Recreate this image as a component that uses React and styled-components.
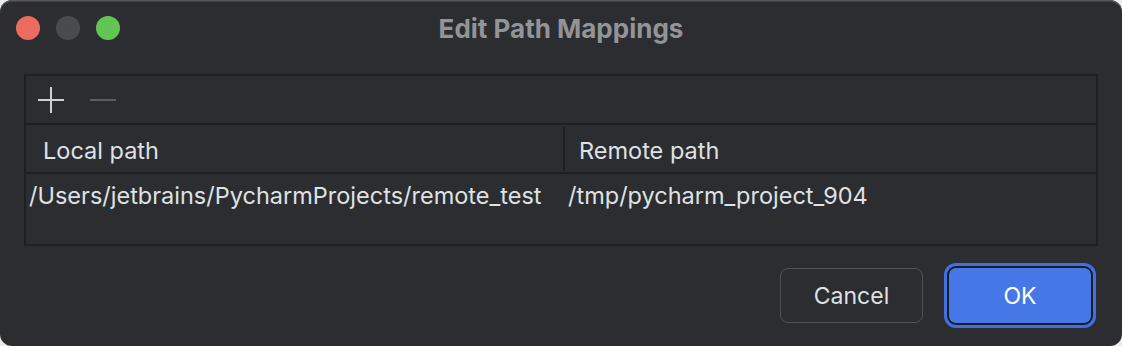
import React from "react";
import styled, { createGlobalStyle } from "styled-components";

const GlobalStyle = createGlobalStyle`
  html, body {
    margin: 0;
    padding: 0;
    background: #ececec;
  }
  body {
    font-family: Inter, "Noto Sans", sans-serif;
    -webkit-font-smoothing: antialiased;
  }
`;

const mappings = [
  { local: "/Users/jetbrains/PycharmProjects/remote_test", remote: "/tmp/pycharm_project_904" },
];

function App() {
  return (
    <>
      <GlobalStyle />
      <Window>
        <TitleBar>
          <Lights>
            <Light color="#ed6a5e" />
            <Light color="#4a4b4f" />
            <Light color="#61c554" />
          </Lights>
          <Title>Edit Path Mappings</Title>
          <span />
        </TitleBar>

        <Content>
          <Table>
            <Toolbar>
              <ToolButton>
                <svg width="26" height="26" viewBox="0 0 26 26">
                  <path d="M13 0v26M0 13h26" stroke="#ced0d6" strokeWidth="2" />
                </svg>
              </ToolButton>
              <ToolButton>
                <svg width="26" height="26" viewBox="0 0 26 26">
                  <path d="M0 13h26" stroke="#5a5d63" strokeWidth="2" />
                </svg>
              </ToolButton>
            </Toolbar>
            <HeaderRow>
              <HeaderCell pad={17} divider>Local path</HeaderCell>
              <HeaderCell pad={14}>Remote path</HeaderCell>
            </HeaderRow>
            <Body>
              {mappings.map((m) => (
                <Row key={m.local}>
                  <Cell>{m.local}</Cell>
                  <Cell>{m.remote}</Cell>
                </Row>
              ))}
            </Body>
          </Table>
        </Content>

        <Footer>
          <CancelButton>Cancel</CancelButton>
          <OkButton>OK</OkButton>
        </Footer>
      </Window>
    </>
  );
}

export default App;

const Window = styled.div`
  width: 1122px;
  height: 346px;
  box-sizing: border-box;
  background: #2b2d30;
  border-radius: 12px;
  box-shadow: inset 0 1.5px 0 #56575b;
  display: flex;
  flex-direction: column;
  overflow: hidden;
`;

const TitleBar = styled.div`
  height: 56px;
  display: grid;
  grid-template-columns: 1fr auto 1fr;
  align-items: center;
  padding: 0 16px;
`;

const Lights = styled.div`
  display: flex;
  gap: 16px;
`;

const Light = styled.span`
  width: 24px;
  height: 24px;
  border-radius: 50%;
  background: ${(p) => p.color};
`;

const Title = styled.div`
  font-size: 26px;
  font-weight: 700;
  color: #939497;
`;

const Content = styled.div`
  padding: 18px 24px 0;
`;

const Table = styled.div`
  height: 172px;
  box-sizing: border-box;
  border: 2px solid #1e1f22;
  display: flex;
  flex-direction: column;
`;

const Toolbar = styled.div`
  height: 49px;
  box-sizing: border-box;
  border-bottom: 2px solid #1e1f22;
  display: flex;
  align-items: center;
  gap: 26px;
  padding-left: 12px;
`;

const ToolButton = styled.span`
  display: flex;
  width: 26px;
  height: 26px;
`;

const HeaderRow = styled.div`
  height: 49px;
  box-sizing: border-box;
  border-bottom: 2px solid #1e1f22;
  display: grid;
  grid-template-columns: 539px 1fr;
  align-items: center;
`;

const HeaderCell = styled.div`
  height: 44px;
  display: flex;
  align-items: center;
  padding: 3px 0 0 ${(p) => p.pad}px;
  box-sizing: border-box;
  border-right: ${(p) => (p.divider ? "2px solid #1e1f22" : "none")};
  font-size: 23.5px;
  color: #dfe1e5;
`;

const Body = styled.div`
  flex: 1;
`;

const Row = styled.div`
  display: grid;
  grid-template-columns: 539px 1fr;
  padding-top: 8px;
`;

const Cell = styled.div`
  padding-left: 3px;
  line-height: 28px;
  font-size: 23.5px;
  color: #dfe1e5;
  white-space: nowrap;
`;

const Footer = styled.div`
  display: flex;
  justify-content: flex-end;
  align-items: center;
  gap: 24px;
  padding: 20px 29px 0 0;
`;

const CancelButton = styled.button`
  width: 143px;
  height: 55px;
  border: 1.5px solid #4e5157;
  border-radius: 8px;
  background: transparent;
  color: #dfe1e5;
  font-family: inherit;
  font-size: 23px;
`;

const OkButton = styled.button`
  width: 146px;
  height: 59px;
  border: 2px solid #1c1e24;
  border-radius: 9px;
  background: #4677e6;
  box-shadow: 0 0 0 3px #3f71e2;
  color: #ffffff;
  font-family: inherit;
  font-size: 23px;
`;
